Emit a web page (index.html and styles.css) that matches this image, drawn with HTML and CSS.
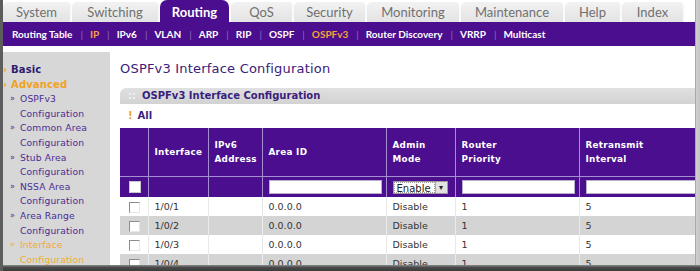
FILE: index.html
```html
<!DOCTYPE html>
<html>
<head>
<meta charset="utf-8">
<link rel="stylesheet" href="styles.css">
</head>
<body>
<div class="screen">
  <div class="page">
    <div class="tabs">
      <div class="tab t-system">System</div>
      <div class="tab t-switching">Switching</div>
      <div class="tab active t-routing">Routing</div>
      <div class="tab t-qos">QoS</div>
      <div class="tab t-security">Security</div>
      <div class="tab t-monitoring">Monitoring</div>
      <div class="tab t-maint">Maintenance</div>
      <div class="tab t-help">Help</div>
      <div class="tab t-index">Index</div>
    </div>
    <div class="subnav">
      <span class="sn">Routing Table</span><span class="sep">|</span>
      <span class="sn cur">IP</span><span class="sep">|</span>
      <span class="sn">IPv6</span><span class="sep">|</span>
      <span class="sn">VLAN</span><span class="sep">|</span>
      <span class="sn">ARP</span><span class="sep">|</span>
      <span class="sn">RIP</span><span class="sep">|</span>
      <span class="sn">OSPF</span><span class="sep">|</span>
      <span class="sn cur">OSPFv3</span><span class="sep">|</span>
      <span class="sn">Router Discovery</span><span class="sep">|</span>
      <span class="sn">VRRP</span><span class="sep">|</span>
      <span class="sn">Multicast</span>
    </div>
    <div class="body">
      <div class="sidebar">
        <div class="grp"><span class="arr">›</span>Basic</div>
        <div class="grp adv"><span class="arr">›</span>Advanced</div>
        <div class="item"><span class="rq">»</span>OSPFv3<br>Configuration</div>
        <div class="item"><span class="rq">»</span>Common Area<br>Configuration</div>
        <div class="item"><span class="rq">»</span>Stub Area<br>Configuration</div>
        <div class="item"><span class="rq">»</span>NSSA Area<br>Configuration</div>
        <div class="item"><span class="rq">»</span>Area Range<br>Configuration</div>
        <div class="item on"><span class="rq">»</span>Interface<br>Configuration</div>
      </div>
      <div class="main">
        <h1 class="title">OSPFv3 Interface Configuration</h1>
        <div class="box">
          <div class="boxhead"><span class="dots">::</span>OSPFv3 Interface Configuration</div>
          <div class="allrow"><span class="bang">!</span>All</div>
          <div class="tablewrap">
            <table class="grid">
              <colgroup>
                <col class="c0"><col class="c1"><col class="c2"><col class="c3"><col class="c4"><col class="c5"><col class="c6">
              </colgroup>
              <thead>
                <tr class="hrow">
                  <th></th>
                  <th>Interface</th>
                  <th>IPv6<br>Address</th>
                  <th>Area ID</th>
                  <th>Admin<br>Mode</th>
                  <th>Router<br>Priority</th>
                  <th>Retransmit<br>Interval</th>
                </tr>
                <tr class="irow">
                  <td><span class="cbw"></span></td>
                  <td></td>
                  <td></td>
                  <td><span class="inp"></span></td>
                  <td><span class="sel"><span class="selt">Enable</span><span class="selb">▾</span></span></td>
                  <td><span class="inp"></span></td>
                  <td><span class="inp"></span></td>
                </tr>
              </thead>
              <tbody>
                <tr><td><span class="cb"></span></td><td>1/0/1</td><td></td><td>0.0.0.0</td><td>Disable</td><td>1</td><td>5</td></tr>
                <tr class="alt"><td><span class="cb"></span></td><td>1/0/2</td><td></td><td>0.0.0.0</td><td>Disable</td><td>1</td><td>5</td></tr>
                <tr><td><span class="cb"></span></td><td>1/0/3</td><td></td><td>0.0.0.0</td><td>Disable</td><td>1</td><td>5</td></tr>
                <tr class="alt"><td><span class="cb"></span></td><td>1/0/4</td><td></td><td>0.0.0.0</td><td>Disable</td><td>1</td><td>5</td></tr>
              </tbody>
            </table>
          </div>
        </div>
      </div>
    </div>
  </div>
  <div class="edge-right"></div>
  <div class="edge-bottom"></div>
</div>
</body>
</html>
```
FILE: styles.css
```css
html, body {
  margin: 0;
  padding: 0;
  background: #fff;
}
.screen {
  position: relative;
  width: 700px;
  height: 271px;
  overflow: hidden;
  background: #fff;
  border-left: 3px solid #5d5d5d;
  box-sizing: border-box;
}
.page {
  width: 692px;
  height: 271px;
  overflow: hidden;
  font-family: "DejaVu Sans", Verdana, sans-serif;
}
.edge-right {
  position: absolute;
  top: 0;
  right: 0;
  width: 5px;
  height: 271px;
  background: linear-gradient(to right, #a9a9a9 0, #a9a9a9 1px, #cfcfcf 1px, #c4c4c4 100%);
}
.edge-bottom {
  position: absolute;
  left: 0;
  bottom: 0;
  width: 700px;
  height: 6px;
  background: linear-gradient(to bottom, #8a8a8a 0, #4a4a4a 40%, #3a3a3a 100%);
}

/* top tabs */
.tabs {
  display: flex;
  height: 22px;
  background: #ffffff;
  align-items: flex-end;
}
.tab {
  height: 20px;
  line-height: 21px;
  text-align: center;
  font-family: Lato, "Open Sans", sans-serif;
  font-size: 13px;
  color: #707070;
  background: linear-gradient(to bottom, #f2f2f2, #e3e3e3);
  border-right: 2px solid #fafafa;
  box-sizing: border-box;
  border-radius: 5px 5px 0 0;
}
.tab.active {
  height: 22px;
  line-height: 24px;
  background: #4b0e8e;
  color: #fff;
  font-weight: bold;
  border-radius: 7px 7px 0 0;
  border-right: none;
  margin-right: 2px;
}
.t-system { width: 69px; }
.t-switching { width: 88px; }
.t-routing { width: 69px; }
.t-qos { width: 63px; }
.t-security { width: 73px; }
.t-monitoring { width: 94px; }
.t-maint { width: 104px; }
.t-help { width: 57px; }
.t-index { width: 63px; }

/* subnav */
.subnav {
  height: 24px;
  background: #4b0e8e;
  display: flex;
  align-items: center;
  padding-left: 9px;
  font-family: Lato, "Open Sans", sans-serif;
  font-weight: bold;
  font-size: 10px;
  color: #fff;
}
.sn.cur { color: #f7a23a; }
.sep {
  color: #8f6cc4;
  font-weight: normal;
  margin: 0 7px 0 8px;
}

/* body */
.body {
  display: flex;
  margin-top: 6px;
}
.sidebar {
  width: 107px;
  height: 230px;
  background: #d7d7d7;
  padding-top: 11px;
  box-sizing: border-box;
  font-size: 9.2px;
  line-height: 14.6px;
  letter-spacing: 0.15px;
  flex-shrink: 0;
}
.grp {
  font-weight: bold;
  color: #2c1a6e;
  padding-left: 8px;
  position: relative;
  font-size: 10px;
}
.grp.adv { color: #f0a21e; }
.arr {
  position: absolute;
  left: 0;
  color: #f0a21e;
  font-weight: bold;
}
.item {
  color: #4b2c94;
  padding-left: 17px;
  position: relative;
}
.item.on { color: #f0ab30; }
.rq {
  position: absolute;
  left: 7px;
  font-size: 8px;
}

.main {
  flex: 1;
  padding-left: 10px;
  min-width: 0;
}
.title {
  margin: 8px 0 0 0;
  font-size: 13px;
  font-weight: normal;
  color: #3b2079;
  height: 28px;
  line-height: 17px;
  letter-spacing: 0.2px;
}
.box {
  width: 100%;
}
.boxhead {
  height: 16px;
  line-height: 16px;
  background: linear-gradient(to bottom, #e0e0e0, #d2d2d2);
  border-radius: 6px 0 0 0;
  font-size: 10px;
  font-weight: bold;
  color: #3a1f7c;
  padding-left: 8px;
}
.dots {
  color: #f2f2f2;
  font-size: 10px;
  margin-right: 6px;
}
.allrow {
  height: 24px;
  line-height: 24px;
  font-size: 10px;
  font-weight: bold;
  color: #3a1f7c;
  padding-left: 8px;
}
.bang {
  color: #f0a21e;
  margin-right: 5px;
}
.tablewrap {
  overflow: hidden;
}
.grid {
  border-collapse: collapse;
  table-layout: fixed;
  width: 600px;
  font-size: 9.5px;
}
.c0 { width: 28px; }
.c1 { width: 60px; }
.c2 { width: 54px; }
.c3 { width: 124px; }
.c4 { width: 69px; }
.c5 { width: 124px; }
.c6 { width: 141px; }
.grid th, .grid td {
  border-left: 1px solid #e8e8e8;
  padding: 0 0 0 6px;
  text-align: left;
  white-space: nowrap;
  overflow: hidden;
}
.grid tr > :first-child { border-left: none; }
.hrow th {
  height: 48px;
  background: #4b0e8e;
  color: #fff;
  font-weight: bold;
  font-size: 8.8px;
  letter-spacing: 0.3px;
  line-height: 14px;
  border-left: 1px solid #a58fd0;
  border-bottom: 1px solid #a58fd0;
}
.irow td {
  height: 20px;
  background: #4b0e8e;
  border-left: 1px solid #a58fd0;
}
.cbw {
  display: inline-block;
  width: 10px;
  height: 10px;
  background: #fff;
  border: 1px solid #c8c8c8;
  margin-left: 3px;
  vertical-align: middle;
}
.inp {
  display: block;
  height: 12px;
  background: #fff;
  border: 1px solid #b7b0cc;
  margin-right: 4px;
}
.sel {
  display: flex;
  width: 55px;
  height: 13px;
  background: #fff;
  border: 1px solid #9a9a9a;
  font-size: 10px;
  color: #222;
  box-sizing: border-box;
  line-height: 11px;
}
.selt {
  flex: 1;
  padding-left: 2px;
  border: 1px dotted #999;
}
.selb {
  width: 11px;
  background: #e2e2e2;
  border-left: 1px solid #aaa;
  font-size: 8px;
  text-align: center;
}
tbody td {
  height: 19px;
  color: #333;
  background: #fff;
  border-left: 1px solid #e4e4e4;
}
tbody tr.alt td {
  background: #d4d4d4;
  border-left: 1px solid #ebebeb;
}
.cb {
  display: inline-block;
  width: 9px;
  height: 9px;
  border: 1px solid #8c8c8c;
  border-right-color: #e6e6e6;
  border-bottom-color: #e6e6e6;
  background: #fff;
  margin-left: 3px;
  vertical-align: middle;
}
```
